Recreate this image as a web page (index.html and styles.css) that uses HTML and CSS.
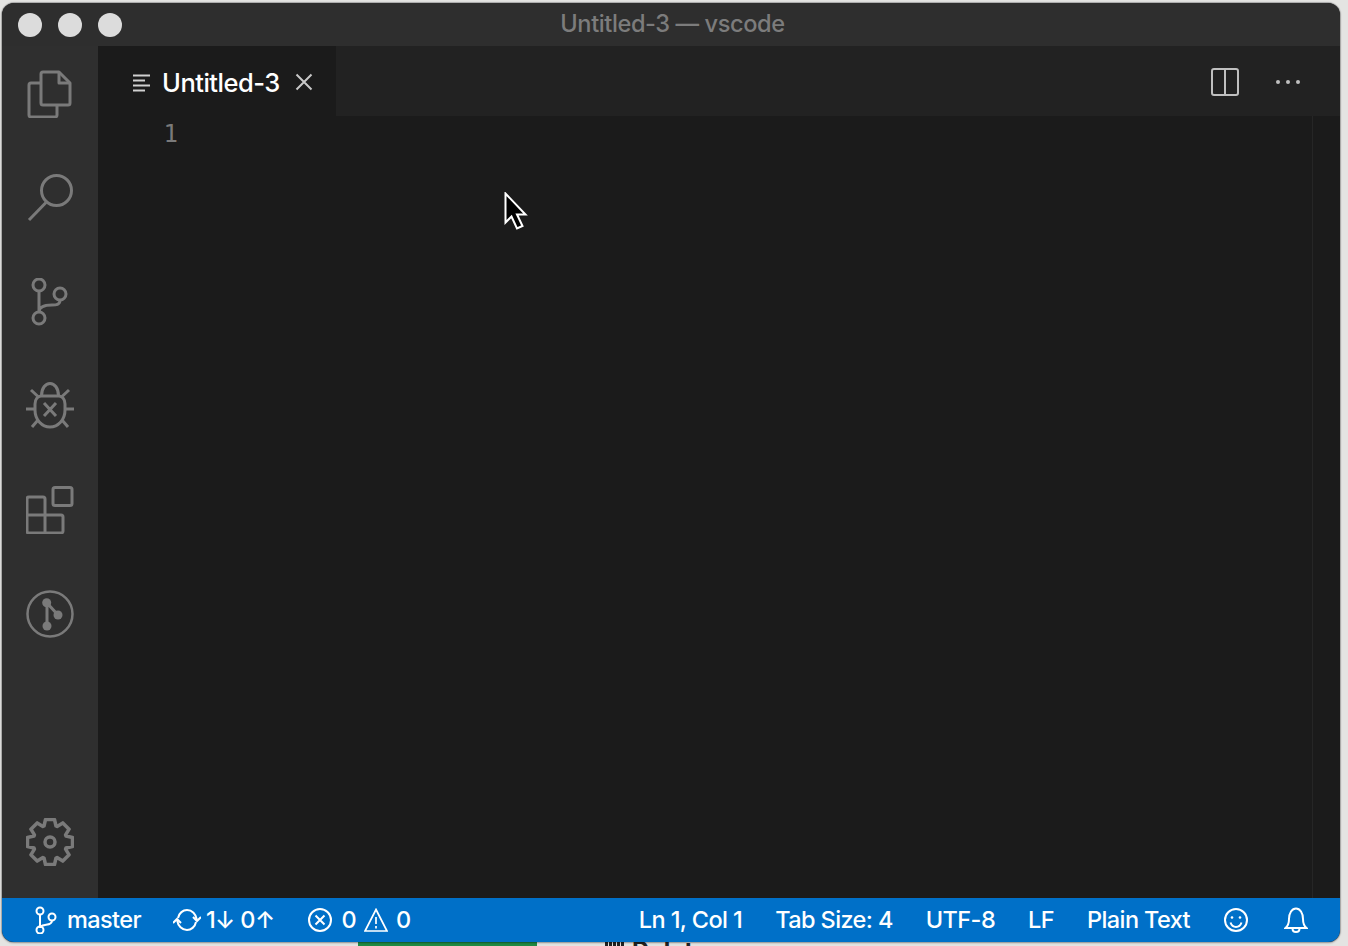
FILE: index.html
```html
<!DOCTYPE html>
<html lang="en">
<head>
<meta charset="utf-8">
<title>Untitled-3 — vscode</title>
<link rel="stylesheet" href="styles.css">
</head>
<body>
<div class="backdrop">
  <div class="bg-green"></div>
  <div class="bg-label"><span class="bg-glyph"></span>Delete</div>
</div>
<div class="window">
  <header class="titlebar">
    <div class="lights"><i class="light"></i><i class="light"></i><i class="light"></i></div>
    <div class="title">Untitled-3 — vscode</div>
  </header>
  <div class="main">
    <nav class="activity">
      <svg class="act" viewBox="0 0 48 48"><path d="M15 13H5a2 2 0 0 0-2 2v30a2 2 0 0 0 2 2h24a2 2 0 0 0 2-2v-10"/><path d="M17 2h16l11 11v20a2 2 0 0 1-2 2H17a2 2 0 0 1-2-2V4a2 2 0 0 1 2-2z"/><path d="M33 2v11h11"/></svg>
      <svg class="act" viewBox="0 0 48 48"><circle cx="30.5" cy="16.5" r="15"/><path d="M20 28.500 3 46"/></svg>
      <svg class="act" viewBox="0 0 48 48"><circle cx="13" cy="7" r="6"/><circle cx="34" cy="16" r="6"/><circle cx="13" cy="40" r="6"/><path d="M13 13v21M34 22c0 5-4 5-8 5-6 0-13 1-13 7"/></svg>
      <svg class="act" viewBox="0 0 48 48"><path d="M9 22c0-5 3-8 6-8h18c3 0 6 3 6 8v6c0 10-7 17-15 17S9 38 9 28z"/><path d="M15.500 14c0-8 4-12.500 8.500-12.500S32.500 6 32.500 14M5 8l7 6.500M43 8l-7 6.500M0 27h9M39 27h9M6 45l6-7M42 45l-6-7M18 21l12 13M30 21 18 34"/></svg>
      <svg class="act" viewBox="0 0 48 48"><rect x="27" y="1.500" width="19" height="18" rx="2"/><path d="M3 11h14a2 2 0 0 1 2 2v16h16a2 2 0 0 1 2 2v14a2 2 0 0 1-2 2H3a2 2 0 0 1-2-2V13a2 2 0 0 1 2-2zM1 29h18v18"/></svg>
      <svg class="act" viewBox="0 0 48 48"><circle cx="24" cy="24" r="22.500" class="thin"/><path d="M21 13l11 12M21 13v23"/><circle cx="20.700" cy="12.700" r="4.500" class="solid"/><circle cx="32" cy="25" r="4.500" class="solid"/><circle cx="21" cy="36" r="4.500" class="solid"/></svg>
      <svg class="act gear" viewBox="0 0 48 48"><g transform="translate(24 24)"><polygon points="-6,-16 -4.500,-22.500 4.500,-22.500 6,-16 7.070,-15.560 12.800,-19.100 19.100,-12.800 15.560,-7.070 16,-6 22.500,-4.500 22.500,4.500 16,6 15.560,7.070 19.100,12.800 12.800,19.100 7.070,15.560 6,16 4.500,22.500 -4.500,22.500 -6,16 -7.070,15.560 -12.800,19.100 -19.100,12.800 -15.560,7.070 -16,6 -22.500,4.500 -22.500,-4.500 -16,-6 -15.560,-7.070 -19.100,-12.800 -12.800,-19.100 -7.070,-15.560"/><circle r="5"/></g></svg>
    </nav>
    <section class="editor-area">
      <div class="tabbar">
        <div class="tab">
          <svg class="tab-icon" viewBox="0 0 18 18"><path d="M0 1.500h17M0 6.500h12M0 11.500h17M0 16.500h12"/></svg>
          <span class="tab-name">Untitled-3</span>
          <svg class="tab-close" viewBox="0 0 18 18"><path d="M1.500 1.500l15 15M16.500 1.500l-15 15"/></svg>
        </div>
        <div class="tab-actions">
          <svg class="split" viewBox="0 0 28 28"><rect x="1" y="1" width="26" height="26" rx="2"/><path d="M14 1v26"/></svg>
          <svg class="more" viewBox="0 0 24 4"><circle cx="2" cy="2" r="2"/><circle cx="12" cy="2" r="2"/><circle cx="22" cy="2" r="2"/></svg>
        </div>
      </div>
      <div class="editor">
        <div class="code"><div class="line-no">1</div></div>
        <div class="minimap"></div>
      </div>
    </section>
  </div>
  <footer class="status">
    <div class="status-left">
      <div class="item branch">
        <svg class="ico-branch" viewBox="0 0 24 28"><circle cx="6" cy="5" r="3.500"/><circle cx="18" cy="11" r="3.500"/><circle cx="6" cy="24" r="3.500"/><path d="M6 8.500v12M18 14.500c0 4-4 4-7 4.500-3 .5-5 1-5 3"/></svg>
        <span>master</span>
      </div>
      <div class="item sync">
        <svg class="ico-sync" viewBox="0 0 28 24"><path d="M5 10C6 5 10 2 14 2c5 0 9 4 10 10M23 14c-1 5-5 8-9 8-5 0-9-4-10-10"/><path d="M20 9l4 4 4-4M0 15l4-4 4 4"/></svg>
        <span>1↓ 0↑</span>
      </div>
      <div class="item problems">
        <svg class="ico-err" viewBox="0 0 24 24"><circle cx="12" cy="12" r="11"/><path d="M7.500 7.500l9 9M16.500 7.500l-9 9"/></svg>
        <span>0</span>
        <svg class="ico-warn" viewBox="0 0 24 24"><path d="M12 1.500 23 23H1z"/><path d="M12 9v7M12 18v2.500"/></svg>
        <span>0</span>
      </div>
    </div>
    <div class="status-right">
      <span>Ln 1, Col 1</span>
      <span>Tab Size: 4</span>
      <span>UTF-8</span>
      <span>LF</span>
      <span>Plain Text</span>
      <svg class="ico-smile" viewBox="0 0 24 24"><circle cx="12" cy="12" r="11"/><circle cx="8" cy="9.500" r="1.300" class="solid"/><circle cx="16" cy="9.500" r="1.300" class="solid"/><path d="M6.500 14.500c1 3 3.500 4.500 5.500 4.500s4.500-1.500 5.500-4.500"/></svg>
      <svg class="ico-bell" viewBox="0 0 24 26"><path d="M1.500 21c3-2.500 3.500-5 3.500-9 0-6 3-10.500 7-10.500s7 4.500 7 10.500c0 4 .5 6.500 3.500 9z"/><path d="M8.500 21.500c0 2.500 1.500 3.500 3.500 3.500s3.500-1 3.500-3.500"/></svg>
    </div>
  </footer>
</div>
<svg class="cursor" viewBox="0 0 24 38"><path d="M1.500 1.500v29l6-6 5.500 12 5.500-2.500-5.500-11.500h8.500z"/></svg>
</body>
</html>
```
FILE: styles.css
```css
html, body {
  margin: 0;
  padding: 0;
  height: 946px;
  overflow: hidden;
}
body {
  background: #e4e4e2;
  font-family: Inter, "Liberation Sans", sans-serif;
  position: relative;
}
.backdrop {
  position: absolute;
  inset: 0;
}
.bg-green {
  position: absolute;
  left: 358px;
  top: 940px;
  width: 179px;
  height: 8px;
  background: #1f8a44;
}
.bg-label {
  position: absolute;
  left: 605px;
  top: 936px;
  font-size: 24px;
  font-weight: 700;
  line-height: 30px;
  color: #222;
  display: flex;
  gap: 7px;
}
.bg-glyph {
  width: 20px;
  height: 16px;
  margin-top: 6px;
  background: repeating-linear-gradient(90deg, #222 0 3px, #e4e4e2 3px 4px);
}
.window {
  position: absolute;
  inset: 3px 8px 4px 2px;
  display: flex;
  flex-direction: column;
  border-radius: 12px;
  overflow: hidden;
  box-shadow: 0 -1px 1px #a9a9a9, 0 1px 2px rgba(0,0,0,.35), 1px 0 1px rgba(0,0,0,.2), -1px 0 1px rgba(0,0,0,.2);
  background: #1b1b1b;
}
.titlebar {
  height: 43px;
  flex: none;
  background: #2e2e2e;
  display: flex;
  align-items: center;
  position: relative;
}
.lights {
  display: flex;
  gap: 16px;
  padding-left: 16px;
}
.light {
  display: block;
  width: 24px;
  height: 24px;
  border-radius: 50%;
  background: #dcdcdc;
}
.title {
  position: absolute;
  left: 0;
  right: 0;
  top: 6px;
  text-align: center;
  padding-left: 3px;
  font-size: 23.600px;
  line-height: 29px;
  letter-spacing: -0.42px;
  color: #7c7c7c;
  font-weight: 450;
}
.main {
  flex: 1;
  display: flex;
  min-height: 0;
}
.activity {
  width: 96px;
  flex: none;
  background: #2f2f2f;
  display: flex;
  flex-direction: column;
  align-items: center;
  gap: 56px;
  padding: 24px 0 32px;
  box-sizing: border-box;
}
.act {
  width: 48px;
  height: 48px;
  flex: none;
  fill: none;
  stroke: #7a7a7a;
  stroke-width: 3;
  stroke-linejoin: round;
}
.act .thin { stroke-width: 2.500; }
.act .solid { fill: #7a7a7a; stroke: none; }
.gear { margin-top: auto; stroke-width: 3.500; }
.editor-area {
  flex: 1;
  display: flex;
  flex-direction: column;
  min-width: 0;
}
.tabbar {
  height: 70px;
  flex: none;
  background: #222;
  display: flex;
  justify-content: space-between;
}
.tab {
  width: 238px;
  background: #1b1b1b;
  display: flex;
  align-items: center;
  padding: 3px 0 0 35px;
  box-sizing: border-box;
}
.tab-icon {
  width: 18px;
  height: 18px;
  fill: none;
  stroke: #d0d0d0;
  stroke-width: 2;
}
.tab-name {
  margin-left: 11px;
  font-size: 25.500px;
  font-weight: 450;
  color: #fff;
  letter-spacing: -0.5px;
}
.tab-close {
  width: 18px;
  height: 18px;
  margin: -2px 0 0 15px;
  fill: none;
  stroke: #c8c8c8;
  stroke-width: 2;
}
.tab-actions {
  display: flex;
  align-items: center;
  gap: 37px;
  padding: 2px 40px 0 0;
}
.split {
  width: 28px;
  height: 28px;
  fill: none;
  stroke: #c0c0c0;
  stroke-width: 2;
}
.more {
  width: 24px;
  height: 4px;
  fill: #c0c0c0;
}
.editor {
  flex: 1;
  display: flex;
  min-height: 0;
}
.code {
  flex: 1;
}
.line-no {
  width: 80px;
  text-align: right;
  box-sizing: border-box;
  font-family: "DejaVu Sans Mono", monospace;
  font-size: 24px;
  line-height: 36px;
  color: #7a7a7a;
}
.minimap {
  width: 27px;
  flex: none;
  border-left: 1px solid #262626;
}
.status {
  height: 44px;
  flex: none;
  background: #0070c8;
  color: #fff;
  display: flex;
  justify-content: space-between;
  align-items: center;
  font-size: 23.500px;
  font-weight: 450;
  letter-spacing: -0.6px;
  padding: 0 32px;
}
.status span { padding-bottom: 2px; }
.status svg {
  fill: none;
  stroke: #fff;
  stroke-width: 2;
  flex: none;
}
.status .solid { fill: #fff; stroke: none; }
.status-left, .status-right, .item {
  display: flex;
  align-items: center;
}
.status-left { gap: 32px; }
.status-right { gap: 33px; }
.problems { margin-left: 2px; }
.ico-branch { width: 24px; height: 28px; margin-right: 9px; }
.ico-sync { width: 28px; height: 24px; margin-right: 5px; }
.ico-err { width: 24px; height: 24px; margin-right: 9px; }
.ico-warn { width: 24px; height: 24px; margin: 0 8px 0 8px; stroke-width: 1.700 !important; }
.ico-smile { width: 24px; height: 24px; margin-left: 1px; }
.ico-bell { width: 24px; height: 26px; margin-left: 3px; }
.cursor {
  position: absolute;
  left: 504px;
  top: 192px;
  width: 24px;
  height: 38px;
  fill: #000;
  stroke: #fff;
  stroke-width: 2;
}
```
